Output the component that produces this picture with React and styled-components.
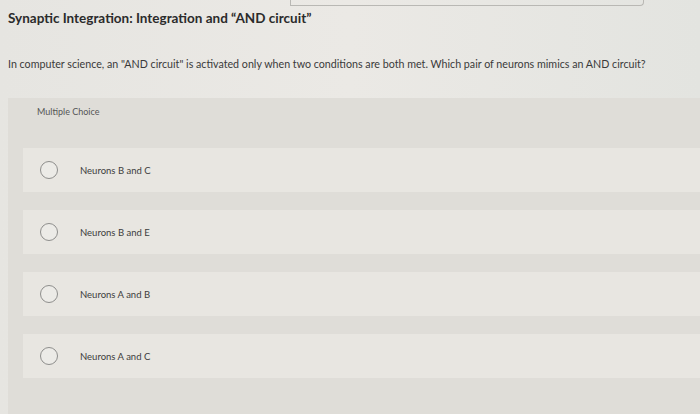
import React from 'react';
import styled, { createGlobalStyle } from 'styled-components';

const GlobalStyle = createGlobalStyle`
  html, body {
    margin: 0;
    padding: 0;
    background: #e8e7e3;
  }
  body {
    font-family: Lato, "Open Sans", sans-serif;
    overflow: hidden;
  }
`;

const options = ['Neurons B and C', 'Neurons B and E', 'Neurons A and B', 'Neurons A and C'];

export default function App() {
  return (
    <Page>
      <GlobalStyle />
      <TopFrame />
      <Title>Synaptic Integration: Integration and “AND circuit”</Title>
      <Question>
        In computer science, an "AND circuit" is activated only when two conditions are both met. Which pair of
        neurons mimics an AND circuit?
      </Question>
      <Panel>
        <PanelHeader>Multiple Choice</PanelHeader>
        <OptionList>
          {options.map((o) => (
            <OptionRow key={o}>
              <Radio />
              <OptionText>{o}</OptionText>
            </OptionRow>
          ))}
        </OptionList>
      </Panel>
    </Page>
  );
}

const Page = styled.div`
  width: 700px;
  height: 414px;
  display: flex;
  flex-direction: column;
  background: linear-gradient(90deg, #e6e5e1 0%, #ebe9e5 50%, #e3e4e0 100%);
`;

const TopFrame = styled.div`
  margin-left: 290px;
  width: 352px;
  height: 5px;
  border: 1px solid #b9b8b4;
  border-top: none;
  border-radius: 0 0 4px 0;
`;

const Title = styled.h1`
  margin: 3px 0 0 8px;
  font-size: 13.5px;
  font-weight: 700;
  color: #2b2b2b;
  line-height: 18px;
`;

const Question = styled.p`
  margin: 30px 0 0 8px;
  font-size: 10.7px;
  color: #3a3a3a;
  line-height: 14px;
  white-space: nowrap;
`;

const Panel = styled.section`
  margin: 27px 0 0 8px;
  flex: 1;
  background: #dfddd8;
  padding-top: 9px;
`;

const PanelHeader = styled.div`
  margin-left: 29px;
  font-size: 9px;
  color: #555;
  line-height: 10px;
`;

const OptionList = styled.div`
  margin-top: 31px;
  padding-left: 15px;
  display: flex;
  flex-direction: column;
  gap: 18px;
`;

const OptionRow = styled.div`
  height: 44px;
  display: flex;
  align-items: center;
  background: #e8e6e1;
  padding-left: 17px;
`;

const Radio = styled.span`
  width: 18px;
  height: 18px;
  border: 1.5px solid #8e8e8c;
  border-radius: 50%;
  box-sizing: border-box;
  background: #ecebe7;
`;

const OptionText = styled.span`
  margin-left: 22px;
  font-size: 9.5px;
  color: #3c3c3c;
`;
